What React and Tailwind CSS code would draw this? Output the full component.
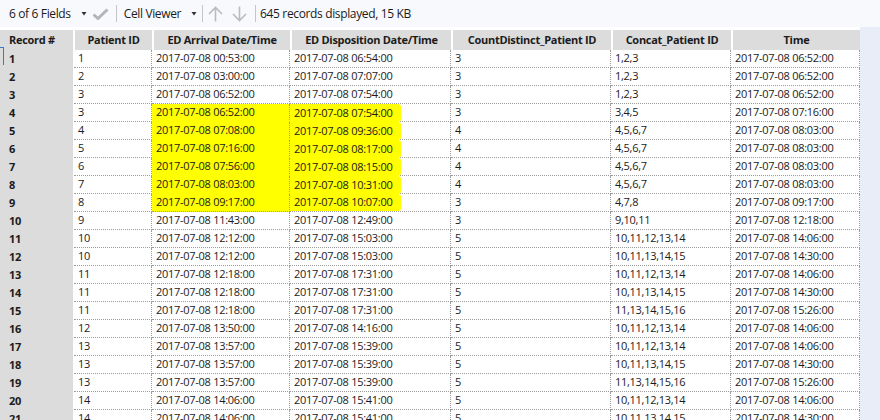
import React from "react";

const rows = [
  ["1", "1", "00:53:00", "06:54:00", "3", "1,2,3", "06:52:00"],
  ["2", "2", "03:00:00", "07:07:00", "3", "1,2,3", "06:52:00"],
  ["3", "3", "06:52:00", "07:54:00", "3", "1,2,3", "06:52:00"],
  ["4", "3", "06:52:00", "07:54:00", "3", "3,4,5", "07:16:00"],
  ["5", "4", "07:08:00", "09:36:00", "4", "4,5,6,7", "08:03:00"],
  ["6", "5", "07:16:00", "08:17:00", "4", "4,5,6,7", "08:03:00"],
  ["7", "6", "07:56:00", "08:15:00", "4", "4,5,6,7", "08:03:00"],
  ["8", "7", "08:03:00", "10:31:00", "4", "4,5,6,7", "08:03:00"],
  ["9", "8", "09:17:00", "10:07:00", "3", "4,7,8", "09:17:00"],
  ["10", "9", "11:43:00", "12:49:00", "3", "9,10,11", "12:18:00"],
  ["11", "10", "12:12:00", "15:03:00", "5", "10,11,12,13,14", "14:06:00"],
  ["12", "10", "12:12:00", "15:03:00", "5", "10,11,13,14,15", "14:30:00"],
  ["13", "11", "12:18:00", "17:31:00", "5", "10,11,12,13,14", "14:06:00"],
  ["14", "11", "12:18:00", "17:31:00", "5", "10,11,13,14,15", "14:30:00"],
  ["15", "11", "12:18:00", "17:31:00", "5", "11,13,14,15,16", "15:26:00"],
  ["16", "12", "13:50:00", "14:16:00", "5", "10,11,12,13,14", "14:06:00"],
  ["17", "13", "13:57:00", "15:39:00", "5", "10,11,12,13,14", "14:06:00"],
  ["18", "13", "13:57:00", "15:39:00", "5", "10,11,13,14,15", "14:30:00"],
  ["19", "13", "13:57:00", "15:39:00", "5", "11,13,14,15,16", "15:26:00"],
  ["20", "14", "14:06:00", "15:41:00", "5", "10,11,12,13,14", "14:06:00"],
  ["21", "14", "14:06:00", "15:41:00", "5", "10,11,13,14,15", "14:30:00"],
];

const grid =
  "grid grid-cols-[73px_79px_138px_161px_160px_120px_129px]";

function Tri() {
  return (
    <svg width="6" height="4" viewBox="0 0 6 4" className="block">
      <path d="M0.5 0 H5.5 L3 3.5 Z" fill="#333" />
    </svg>
  );
}

function Sep() {
  return <div className="w-px h-[17px] bg-[#c4c6cc]" />;
}

export default function App() {
  const D = "2017-07-08 ";
  return (
    <div className="w-[880px] h-[420px] overflow-hidden bg-[#e9edf7] font-['Open_Sans',sans-serif] text-[11px] tracking-[-0.28px] text-[#1b1b1b] relative">
      {/* toolbar */}
      <div className="h-[27px] bg-[#f8f9fc] flex items-center pl-[9px] text-[12px] tracking-[-0.36px]">
        <span>6 of 6 Fields</span>
        <div className="ml-[10px]">
          <Tri />
        </div>
        <svg width="17" height="12" viewBox="0 0 17 12" className="ml-[5px]">
          <path
            d="M1.5 6.5 L6 10.5 L15.5 1.5"
            stroke="#b3b5ba"
            strokeWidth="3"
            fill="none"
          />
        </svg>
        <div className="ml-[7px]">
          <Sep />
        </div>
        <span className="ml-[7px]">Cell Viewer</span>
        <div className="ml-[10px]">
          <Tri />
        </div>
        <div className="ml-[5px]">
          <Sep />
        </div>
        <svg width="15" height="16" viewBox="0 0 15 16" className="ml-[5px]">
          <path
            d="M7.5 15.5 V1.5 M1 8 L7.5 1.5 L14 8"
            stroke="#b9bbc0"
            strokeWidth="1.6"
            fill="none"
          />
        </svg>
        <svg width="15" height="16" viewBox="0 0 15 16" className="ml-[9px]">
          <path
            d="M7.5 0.5 V14.5 M1 8 L7.5 14.5 L14 8"
            stroke="#b9bbc0"
            strokeWidth="1.6"
            fill="none"
          />
        </svg>
        <div className="ml-[8px]">
          <Sep />
        </div>
        <span className="ml-[4px]">645 records displayed, 15 KB</span>
      </div>

      {/* table */}
      <div className="w-[860px] bg-white pt-[3px]">
        <div className={`${grid} h-[20px] font-bold`}>
          <div className="bg-[#dcdcdc] flex items-center pl-[9px]">
            Record #
          </div>
          {[
            "Patient ID",
            "ED Arrival Date/Time",
            "ED Disposition Date/Time",
            "CountDistinct_Patient ID",
            "Concat_Patient ID",
            "Time",
          ].map((h) => (
            <div
              key={h}
              className="bg-[#dcdcdc] border-l-2 border-white flex items-center justify-center whitespace-nowrap"
            >
              {h}
            </div>
          ))}
        </div>

        {rows.map((r, i) => {
          const hl = i >= 3 && i <= 8;
          const last = i === 8;
          const cell =
            "h-[18px] border-b border-dotted border-[#9c9c9c] flex items-center pl-[4px] whitespace-nowrap";
          return (
            <div key={i} className={grid}>
              <div className="h-[18px] bg-[#dcdcdc] flex items-center pl-[9px] font-bold">
                {r[0]}
              </div>
              <div className={`${cell} ml-px border-r`}>{r[1]}</div>
              {hl ? (
                <div
                  className={`${cell} border-r bg-[#ffff00] ${
                    last ? "" : "border-b-[#ffff00]"
                  }`}
                >
                  {D + r[2]}
                </div>
              ) : (
                <div className={`${cell} border-r`}>{D + r[2]}</div>
              )}
              {hl ? (
                <div className="h-[18px] border-b border-r border-dotted border-[#9c9c9c] flex items-start whitespace-nowrap">
                  <div
                    className={`${
                      last ? "h-[17px]" : "h-[18px]"
                    } w-[111px] bg-[#ffff00] flex items-center pl-[4px] rounded-r-[3px]`}
                  >
                    {D + r[3]}
                  </div>
                </div>
              ) : (
                <div className={`${cell} border-r`}>{D + r[3]}</div>
              )}
              <div className={`${cell} border-r`}>{r[4]}</div>
              <div className={`${cell} border-r`}>{r[5]}</div>
              <div className={`${cell} border-r`}>{D + r[6]}</div>
            </div>
          );
        })}
      </div>

      {/* focus indicator */}
      <div className="absolute left-0 top-[47px] w-[4px] h-[18px] border-t border-r border-[#3a78c9]" />
    </div>
  );
}
